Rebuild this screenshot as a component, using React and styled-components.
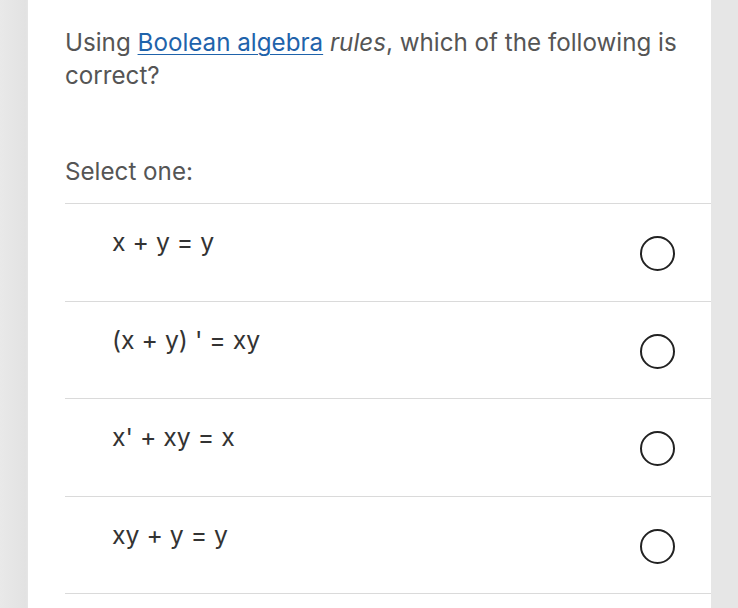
import React from 'react';
import styled, { createGlobalStyle } from 'styled-components';

const GlobalStyle = createGlobalStyle`
  html, body {
    margin: 0;
    padding: 0;
    background: #e6e6e6;
    font-family: Inter, "Noto Sans", "Liberation Sans", sans-serif;
  }
`;

const Page = styled.div`
  display: flex;
  padding: 0 27px 0 28px;
  min-height: 608px;
  background: linear-gradient(to right, #e9e9e9 0px, #e2e2e2 26px, #e6e6e6 28px);
`;

const Card = styled.div`
  flex: 1;
  background: #fff;
  padding: 26px 0 0 37px;
`;

const Question = styled.p`
  margin: 0;
  padding-right: 20px;
  font-size: 24.2px;
  line-height: 33px;
  color: #555;
`;

const Link = styled.a`
  color: #1f63ab;
  text-decoration: underline;
  text-underline-offset: 3px;
  text-decoration-thickness: 1px;
`;

const Prompt = styled.div`
  margin-top: 64px;
  font-size: 24.2px;
  line-height: 32px;
  color: #555;
`;

const Options = styled.ul`
  list-style: none;
  margin: 15px 0 0;
  padding: 0;
  border-top: 1px solid #dadada;
`;

const Option = styled.li`
  display: flex;
  justify-content: space-between;
  align-items: flex-start;
  height: 96.5px;
  padding: 0 36px 0 47px;
  border-bottom: 1px solid #dadada;
`;

const OptionText = styled.span`
  margin-top: 23px;
  font-size: 24.8px;
  line-height: 30px;
  color: #333;
`;

const Radio = styled.span`
  box-sizing: border-box;
  margin-top: 32px;
  width: 35px;
  height: 35px;
  border: 2px solid #222;
  border-radius: 50%;
`;

const options = ['x + y = y', "(x + y) ' = xy", "x' + xy = x", 'xy + y = y'];

export default function App() {
  return (
    <>
      <GlobalStyle />
      <Page>
        <Card>
          <Question>
            Using <Link href="#">Boolean algebra</Link> <em>rules</em>, which of the following is correct?
          </Question>
          <Prompt>Select one:</Prompt>
          <Options>
            {options.map((o) => (
              <Option key={o}>
                <OptionText>{o}</OptionText>
                <Radio />
              </Option>
            ))}
          </Options>
        </Card>
      </Page>
    </>
  );
}
